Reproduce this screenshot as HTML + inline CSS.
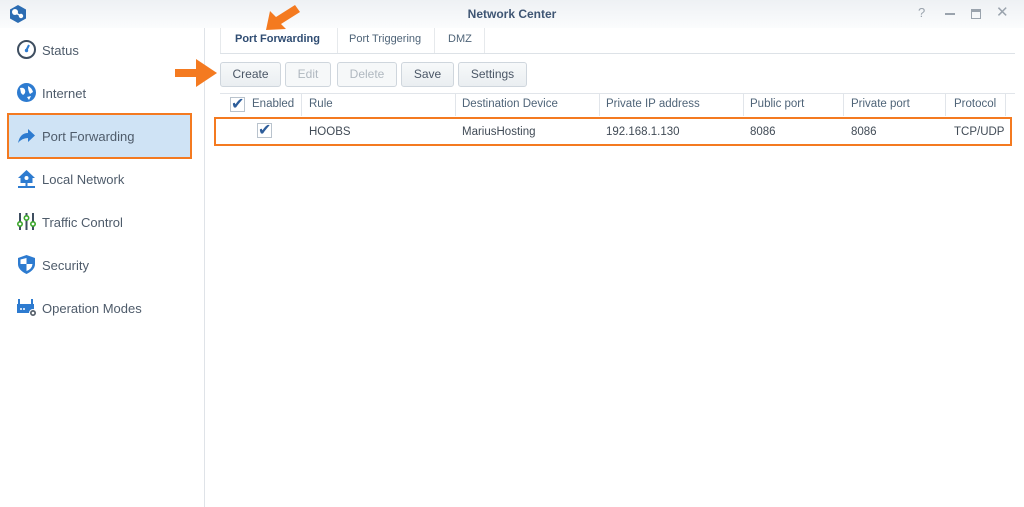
<!DOCTYPE html>
<html><head><style>
body{margin:0;width:1024px;height:507px;background:#fff;font-family:"Liberation Sans",sans-serif;position:relative;overflow:hidden;color:#4a5a6a}
.a{position:absolute}
.title{left:0;top:0;width:1024px;height:28px;background:linear-gradient(#eef1f4,#fbfcfd)}
.side{left:0;top:28px;width:204px;height:479px;border-right:1px solid #dfe3e8}
.it{position:absolute;left:42px;font-size:13px;color:#4e5b6a}
.ic{position:absolute;left:16px;width:21px;height:21px}
.btn{position:absolute;top:62px;height:23px;border:1px solid #cfd6dd;border-radius:3px;background:linear-gradient(#f7f9fa,#eaeef1);font-size:12px;line-height:23px;text-align:center;color:#4a5666}
.hd{position:absolute;top:98px;font-size:11.5px;color:#4f6478}
.cl{position:absolute;top:126px;font-size:11.5px;color:#414b56}
.dv{position:absolute;top:94px;width:1px;height:22px;background:#e1e5ea}
.cb{position:absolute;width:13px;height:13px;border:1px solid #b9c3cd;background:#fff}
</style></head><body>
<div class="a title"></div>
<svg class="a" style="left:8px;top:4px" width="20" height="20" viewBox="0 0 20 20"><path d="M10 1L18 5.5V14.5L10 19L2 14.5V5.5Z" fill="#2c6db3"/><circle cx="7" cy="8" r="3" fill="#fff"/><circle cx="13" cy="12" r="2.2" fill="#fff"/><path d="M8 9L13 12" stroke="#fff" stroke-width="1.5"/></svg>
<div class="a" style="left:0;width:1024px;top:7px;text-align:center;font-size:12px;font-weight:bold;color:#3f5674">Network Center</div>
<div class="a" style="left:918px;top:5px;font-size:13px;color:#9aa3ad">?</div>
<div class="a" style="left:945px;top:13px;width:10px;height:2px;background:#9aa3ad"></div>
<div class="a" style="left:971px;top:9px;width:8px;height:6px;border:1.5px solid #9aa3ad;border-top-width:3px"></div>
<div class="a" style="left:996px;top:3px;font-size:15px;color:#9aa3ad">✕</div>
<div class="a side"></div>
<div class="a" style="left:7px;top:113px;width:181px;height:42px;background:#cfe3f5;border:2px solid #f47a20"></div>
<svg class="ic" style="top:39px" viewBox="0 0 21 21"><circle cx="10.5" cy="10.5" r="8.5" fill="#fff" stroke="#3e4e60" stroke-width="2"/><path d="M10.5 11L13 6" stroke="#2d7bd0" stroke-width="2"/><circle cx="10.5" cy="11.5" r="1.7" fill="#2d7bd0"/></svg>
<div class="it" style="top:43px">Status</div>
<svg class="ic" style="top:82px" viewBox="0 0 21 21"><circle cx="10.5" cy="10.5" r="9.5" fill="#2d7bd0"/><path d="M4 6Q8 5 9 8T7 13L5 11ZM12 4Q16 6 17 10L14 12Q12 9 12 4ZM11 15L15 14L13 18Z" fill="#fff"/></svg>
<div class="it" style="top:86px">Internet</div>
<svg class="ic" style="top:125px" viewBox="0 0 21 21"><path d="M2 18Q4 8 12 8V4L19 10.5L12 17V13Q6 13 2 18Z" fill="#2d7bd0"/></svg>
<div class="it" style="top:129px">Port Forwarding</div>
<svg class="ic" style="top:168px" viewBox="0 0 21 21"><path d="M10.5 2L2 10H4.5V15H16.5V10H19Z" fill="#2d7bd0"/><circle cx="10.5" cy="10" r="2" fill="#fff"/><rect x="2" y="18" width="17" height="2" fill="#2d7bd0"/><rect x="9.5" y="15" width="2" height="3" fill="#2d7bd0"/></svg>
<div class="it" style="top:172px">Local Network</div>
<svg class="ic" style="top:211px" viewBox="0 0 21 21"><g stroke="#3e4e60" stroke-width="2"><path d="M4 2V19M10.5 2V19M17 2V19"/></g><g fill="#fff" stroke="#3ba62b" stroke-width="1.6"><circle cx="4" cy="13" r="2.2"/><circle cx="10.5" cy="7" r="2.2"/><circle cx="17" cy="13" r="2.2"/></g></svg>
<div class="it" style="top:215px">Traffic Control</div>
<svg class="ic" style="top:254px" viewBox="0 0 21 21"><path d="M10.5 1L19 4V10Q19 16 10.5 20Q2 16 2 10V4Z" fill="#2d7bd0"/><path d="M10.5 4V10H4.5V5.5ZM10.5 10H16.5Q16 15 10.5 17Z" fill="#fff"/></svg>
<div class="it" style="top:258px">Security</div>
<svg class="ic" style="top:297px" viewBox="0 0 21 21"><rect x="1" y="7" width="17" height="9" fill="#2d7bd0"/><path d="M3 7V2M16 7V2" stroke="#2d7bd0" stroke-width="2"/><circle cx="17" cy="16" r="3.5" fill="#555f6a" stroke="#fff" stroke-width="1"/><circle cx="17" cy="16" r="1.3" fill="#fff"/><circle cx="5" cy="12" r="1" fill="#fff"/><circle cx="8" cy="12" r="1" fill="#fff"/></svg>
<div class="it" style="top:301px">Operation Modes</div>
<div class="a" style="left:220px;top:28px;width:116px;height:25px;border-left:1px solid #e6e9ec;border-right:1px solid #e6e9ec"></div>
<div class="a" style="left:235px;top:33px;font-size:11px;font-weight:bold;color:#2f4c72">Port Forwarding</div>
<div class="a" style="left:349px;top:33px;font-size:11px;color:#4f6478">Port Triggering</div>
<div class="a" style="left:434px;top:28px;width:1px;height:25px;background:#e6e9ec"></div>
<div class="a" style="left:448px;top:33px;font-size:11px;color:#4f6478">DMZ</div>
<div class="a" style="left:484px;top:28px;width:1px;height:25px;background:#e6e9ec"></div>
<div class="a" style="left:220px;top:53px;width:795px;height:1px;background:#dde2e7"></div>
<div class="btn" style="left:220px;width:59px">Create</div>
<div class="btn" style="left:285px;width:44px;color:#b0b8c0;background:#f6f8f9">Edit</div>
<div class="btn" style="left:337px;width:58px;color:#b0b8c0;background:#f6f8f9">Delete</div>
<div class="btn" style="left:401px;width:51px">Save</div>
<div class="btn" style="left:458px;width:67px">Settings</div>
<div class="a" style="left:220px;top:93px;width:795px;height:1px;background:#e1e5ea"></div>
<div class="cb" style="left:230px;top:97px"></div>
<div class="a" style="left:231px;top:94px;font-size:16px;color:#2d5d9a">✔</div>
<div class="hd" style="left:252px">Enabled</div>
<div class="dv" style="left:301px"></div><div class="hd" style="left:309px">Rule</div>
<div class="dv" style="left:455px"></div><div class="hd" style="left:462px">Destination Device</div>
<div class="dv" style="left:599px"></div><div class="hd" style="left:606px">Private IP address</div>
<div class="dv" style="left:743px"></div><div class="hd" style="left:750px">Public port</div>
<div class="dv" style="left:843px"></div><div class="hd" style="left:851px">Private port</div>
<div class="dv" style="left:945px"></div><div class="hd" style="left:954px">Protocol</div>
<div class="dv" style="left:1005px"></div>
<div class="a" style="left:214px;top:117px;width:794px;height:25px;border:2px solid #f47a20"></div>
<div class="cb" style="left:257px;top:123px"></div>
<div class="a" style="left:258px;top:120px;font-size:16px;color:#2d5d9a">✔</div>
<div class="cl" style="left:309px">HOOBS</div>
<div class="cl" style="left:462px">MariusHosting</div>
<div class="cl" style="left:606px">192.168.1.130</div>
<div class="cl" style="left:750px">8086</div>
<div class="cl" style="left:851px">8086</div>
<div class="cl" style="left:954px">TCP/UDP</div>
<svg class="a" style="left:0;top:0" width="1024" height="507"><path d="M175 69H196V59L217 73L196 87V77H175Z" fill="#f47a20"/><path d="M266 30L270 11L276 17L295 5L300 12L281 24L286 29Z" fill="#f47a20"/></svg>
</body></html>
